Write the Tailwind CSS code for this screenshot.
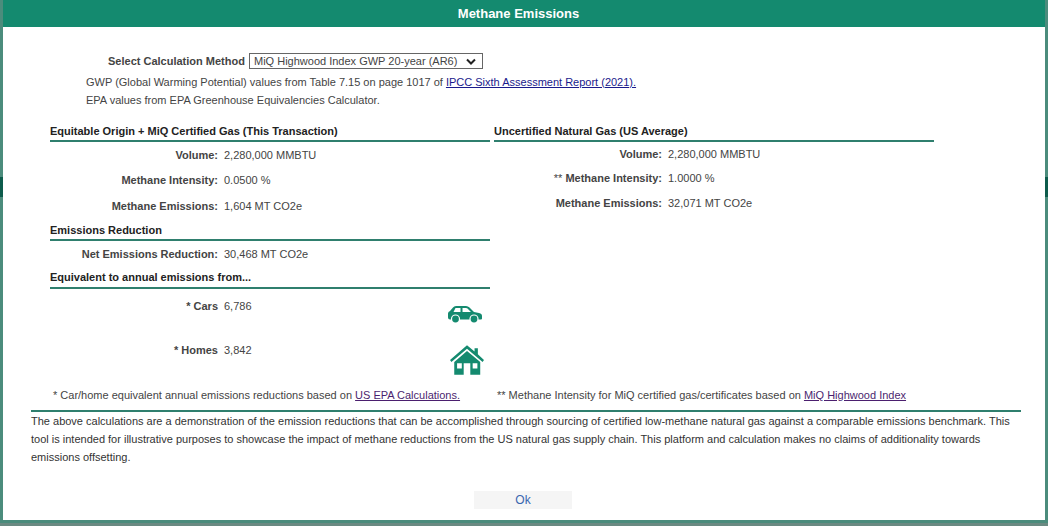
<!DOCTYPE html>
<html lang="en">
<head>
    <meta charset="UTF-8">
    <title>Methane Emissions</title>
    <script src="https://cdn.jsdelivr.net/npm/@tailwindcss/browser@4"></script>
</head>
<body class="relative w-[1048px] h-[526px] overflow-hidden bg-[#6b8a82] font-['Liberation_Sans',Arial,sans-serif] text-[11px] text-[#444444]">
    <!-- Page peeking out behind the dialog -->
    <div class="absolute left-0 top-[177px] w-[3px] h-[20px] bg-[#0d5c4c]"></div>
    <div class="absolute right-0 top-[177px] w-[3px] h-[20px] bg-[#0d5c4c]"></div>

    <!-- Dialog -->
    <div class="w-[1048px] h-[523px] px-[3px] bg-[#4b8c7c]">
        <div class="h-[520px] bg-white flex flex-col">
            <div class="h-[27px] shrink-0 pr-[11px] bg-[#148a6f] text-white text-[13px] font-bold flex items-center justify-center">Methane Emissions</div>

            <!-- Method select -->
            <div class="h-[20px] mt-[24px] pl-[105px] flex items-center">
                <label class="font-bold w-[141px]">Select Calculation Method</label>
                <div class="w-[234px] h-[16px] border border-[#666666] pl-[4px] pr-[6px] flex items-center justify-between">
                    <span>MiQ Highwood Index GWP 20-year (AR6)</span>
                    <svg width="10" height="7" viewBox="0 0 10 7"><path d="M1 1.5 L5 5.5 L9 1.5" fill="none" stroke="#222222" stroke-width="2"/></svg>
                </div>
            </div>
            <p class="pl-[83px] mt-[2px] h-[18px] leading-[18px]">GWP (Global Warming Potential) values from Table 7.15 on page 1017 of <a class="underline text-[#1a1a8c]">IPCC Sixth Assessment Report (2021).</a></p>
            <p class="pl-[83px] h-[18px] leading-[18px]">EPA values from EPA Greenhouse Equivalencies Calculator.</p>

            <!-- Two columns -->
            <div class="flex pl-[47px] mt-[13px] gap-[4px]">
                <div class="w-[440px]">
                    <h3 class="h-[20px] leading-[18px] font-bold text-[#222222] border-b-2 border-[#2f7f6e]">Equitable Origin + MiQ Certified Gas (This Transaction)</h3>
                    <div class="grid grid-cols-[168px_1fr] gap-x-[6px] mt-[4px]">
                        <span class="h-[25px] leading-[18px] font-bold text-right">Volume:</span><span class="leading-[18px]">2,280,000 MMBTU</span>
                        <span class="h-[26px] leading-[18px] font-bold text-right">Methane Intensity:</span><span class="leading-[18px]">0.0500 %</span>
                        <span class="h-[18px] leading-[18px] font-bold text-right">Methane Emissions:</span><span class="leading-[18px]">1,604 MT CO2e</span>
                    </div>
                    <h3 class="h-[20px] mt-[6px] leading-[18px] font-bold text-[#222222] border-b-2 border-[#2f7f6e]">Emissions Reduction</h3>
                    <div class="grid grid-cols-[168px_1fr] gap-x-[6px] mt-[4px]">
                        <span class="h-[18px] leading-[18px] font-bold text-right">Net Emissions Reduction:</span><span class="leading-[18px]">30,468 MT CO2e</span>
                    </div>
                    <h3 class="h-[21px] mt-[5px] leading-[18px] font-bold text-[#222222] border-b-2 border-[#2f7f6e]">Equivalent to annual emissions from...</h3>
                    <div class="grid grid-cols-[168px_224px_1fr] gap-x-[6px] mt-[8px]">
                        <span class="h-[44px] leading-[18px] font-bold text-right">* Cars</span><span class="leading-[18px]">6,786</span>
                        <svg class="mt-[9px] -ml-[6px]" width="34" height="17" viewBox="0 0 34 17">
                            <path fill="#148a6f" fill-rule="evenodd" d="M5 1.500 Q6 0 8 0 H18 Q20 0 21.500 1.500 L26 6 L31 7 Q34 7.500 34 10 V12.500 Q34 13.500 33 13.500 H2 Q0 13.500 0 11.500 V7.500 Q0 5.500 2 5 Z M7.500 2 L5.500 6 H12.500 V2 Z M14.500 2 V6 H23 L19.500 2.500 Q19 2 18 2 Z"/>
                            <circle cx="7.500" cy="13" r="4.600" fill="#ffffff"/>
                            <circle cx="7.500" cy="13" r="3.400" fill="#148a6f"/>
                            <circle cx="26" cy="13" r="4.600" fill="#ffffff"/>
                            <circle cx="26" cy="13" r="3.400" fill="#148a6f"/>
                        </svg>
                        <span class="h-[44px] leading-[18px] font-bold text-right">* Homes</span><span class="leading-[18px]">3,842</span>
                        <svg class="mt-[4px] -ml-[4px]" width="34" height="30" viewBox="0 0 36 31">
                            <path fill="#148a6f" fill-rule="evenodd" d="M18 0 L26 6.500 V3 H29.500 V9.500 L36 15.500 L34.500 17.500 L18 3.500 L1.500 17.500 L0 15.500 Z M18 6 L32 17.500 V31 H21.500 V19 H14.500 V31 H4.500 V17.500 Z M7.500 19 V24.500 H12.500 V19 Z M24 19 V24.500 H29 V19 Z"/>
                        </svg>
                    </div>
                </div>
                <div class="w-[440px]">
                    <h3 class="h-[20px] leading-[18px] font-bold text-[#222222] border-b-2 border-[#2f7f6e]">Uncertified Natural Gas (US Average)</h3>
                    <div class="grid grid-cols-[168px_1fr] gap-x-[6px] mt-[3px]">
                        <span class="h-[24px] leading-[18px] font-bold text-right">Volume:</span><span class="leading-[18px]">2,280,000 MMBTU</span>
                        <span class="h-[25px] leading-[18px] text-right"><span class="font-normal">**</span> <b>Methane Intensity:</b></span><span class="leading-[18px]">1.0000 %</span>
                        <span class="h-[18px] leading-[18px] font-bold text-right">Methane Emissions:</span><span class="leading-[18px]">32,071 MT CO2e</span>
                    </div>
                </div>
            </div>

            <!-- Footnotes -->
            <div class="flex h-[18px] mt-[1px] leading-[18px]">
                <p class="pl-[50px] w-[491px]">* Car/home equivalent annual emissions reductions based on <a class="underline text-[#4b1f6f]">US EPA Calculations.</a></p>
                <p class="pl-[3px]">** Methane Intensity for MiQ certified gas/certificates based on <a class="underline text-[#4b1f6f]">MiQ Highwood Index</a></p>
            </div>
            <div class="ml-[28px] mr-[24px] mt-[6px] border-t-2 border-[#2f7f6e] leading-[18px] text-[#333333]">
                <p>The above calculations are a demonstration of the emission reductions that can be accomplished through sourcing of certified low-methane natural gas against a comparable emissions benchmark. This tool is intended for illustrative purposes to showcase the impact of methane reductions from the US natural gas supply chain. This platform and calculation makes no claims of additionality towards emissions offsetting.</p>
            </div>
            <div class="flex justify-center mt-[25px] pr-[2px]">
                <button class="w-[98px] h-[18px] bg-[#f5f5f5] text-[#3a66b0] text-[12px] leading-[18px]">Ok</button>
            </div>
        </div>
    </div>
</body>
</html>
